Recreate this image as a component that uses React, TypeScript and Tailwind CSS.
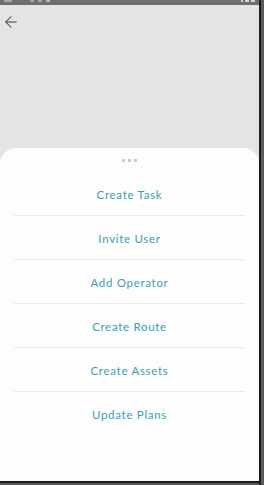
import { ArrowLeft } from "lucide-react";

const actions = [
  "Create Task",
  "Invite User",
  "Add Operator",
  "Create Route",
  "Create Assets",
  "Update Plans",
];

export default function App() {
  return (
    <div className="w-[264px] h-[485px] flex bg-[#5a5a5a] overflow-hidden">
      <div className="w-[261px] h-[485px] flex flex-col border-r-2 border-[#1c1c1c]">
        <div className="h-[483px] flex flex-col border-b-2 border-[#1c1c1c]">
          {/* status bar */}
          <div className="h-[5px] bg-[#6e6e6e] flex items-start justify-between px-1">
            <div className="flex gap-1 opacity-70">
              <div className="w-[8px] h-[2px] bg-[#bdbdbd]" />
              <div className="w-[4px] h-[2px] bg-[#bdbdbd] ml-[14px]" />
              <div className="w-[4px] h-[2px] bg-[#bdbdbd]" />
              <div className="w-[4px] h-[2px] bg-[#d5d5d5]" />
            </div>
            <div className="flex gap-[2px]">
              <div className="w-[2px] h-[2px] bg-[#d5d5d5]" />
              <div className="w-[4px] h-[2px] bg-[#d5d5d5]" />
              <div className="w-[4px] h-[2px] bg-[#d5d5d5]" />
            </div>
          </div>
          <div className="flex-1 bg-[#e4e4e4] flex flex-col">
            <div className="h-[143px] pt-[8px] pl-[2px]">
              <ArrowLeft size={18} strokeWidth={1.4} className="text-[#3a3a3a]" />
            </div>
            <div className="flex-1 bg-[#fdfdfd] rounded-t-[16px] flex flex-col">
              <div className="h-[24px] flex items-center justify-center gap-[3px]">
                <div className="w-[3px] h-[3px] bg-[#b3dcb3]" />
                <div className="w-[3px] h-[3px] bg-[#b3dcb3]" />
                <div className="w-[3px] h-[3px] bg-[#b3dcb3]" />
              </div>
              {actions.map((a, i) => (
                <div key={a} className="flex flex-col">
                  <div
                    className="h-[44px] pt-[2px] flex items-center justify-center text-[11.5px] tracking-[0.7px] text-[#3b9db3]"
                    style={{ fontFamily: "Lato, 'Open Sans', sans-serif" }}
                  >
                    {a}
                  </div>
                  {i < actions.length - 1 && (
                    <div className="ml-[14px] w-[230px] h-px bg-[#e9e9e9] -mt-px" />
                  )}
                </div>
              ))}
            </div>
          </div>
        </div>
      </div>
    </div>
  );
}
